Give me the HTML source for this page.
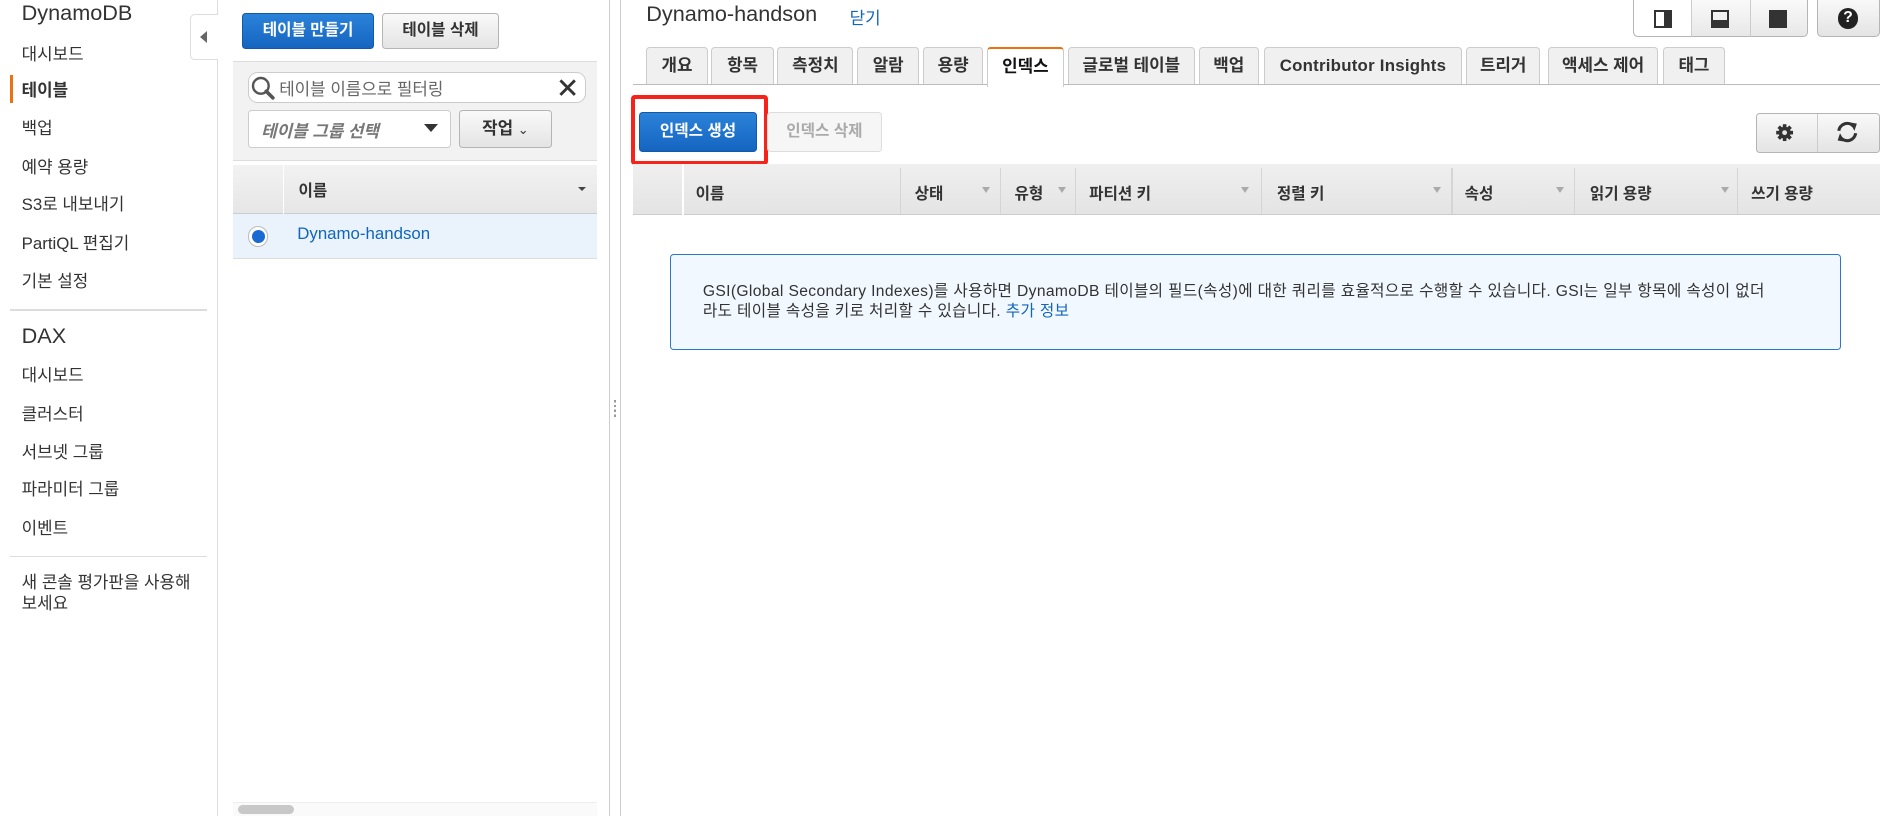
<!DOCTYPE html>
<html><head><meta charset="utf-8"><style>
*{box-sizing:border-box;margin:0;padding:0}
html,body{width:1887px;height:816px;overflow:hidden;background:#fff}
#w{zoom:1.2035;width:1568px;height:678px;position:relative;font-family:"Liberation Sans","Noto Sans CJK KR",sans-serif;color:#333;font-size:14px}
.a{position:absolute}
.nav{left:18px;font-size:14px;color:#333;white-space:nowrap}
.btn{position:absolute;border:1px solid #aab;border-radius:3px;background:linear-gradient(#f9f9f9,#e4e4e4);font-size:13px;font-weight:bold;color:#333;text-align:center;border-color:#b5b5b5}
.bb{background:linear-gradient(#2b82d9,#1565c0);border-color:#1459a8;color:#fff}
.tab{position:absolute;top:39px;height:31px;border:1px solid #ccc;border-bottom:none;background:#f0f0f0;border-radius:3px 3px 0 0;font-size:14px;font-weight:bold;color:#333;text-align:center;line-height:30px}
.th{position:absolute;font-size:13px;font-weight:bold;color:#333;top:150px}
.ar{position:absolute;top:155px;width:0;height:0;border-left:4px solid transparent;border-right:4px solid transparent;border-top:5px solid #aaa}
.dv{position:absolute;top:140px;height:38px;width:1px;background:#d5d5d5}
</style></head><body><div id="w">
<div class="a" style="left:180px;top:0;width:1px;height:678px;background:#ddd"></div>
<div class="a" style="left:158px;top:12px;width:23px;height:38px;background:#fff;border:1px solid #ddd;border-right:none;border-radius:4px 0 0 4px"></div>
<div class="a" style="left:166px;top:26px;border-right:6px solid #666;border-top:5px solid transparent;border-bottom:5px solid transparent"></div>
<div class="a nav" style="top:0px;font-size:18px">DynamoDB</div>
<div class="a nav" style="top:33px">대시보드</div>
<div class="a" style="left:8px;top:62px;width:3px;height:24px;background:#ec7211"></div>
<div class="a nav" style="top:63px;font-weight:bold">테이블</div>
<div class="a nav" style="top:95px">백업</div>
<div class="a nav" style="top:127px">예약 용량</div>
<div class="a nav" style="top:158px">S3로 내보내기</div>
<div class="a nav" style="top:190px">PartiQL 편집기</div>
<div class="a nav" style="top:222px">기본 설정</div>
<div class="a" style="left:8px;top:257px;width:164px;height:1px;background:#ddd"></div>
<div class="a nav" style="top:268px;font-size:18px">DAX</div>
<div class="a nav" style="top:300px">대시보드</div>
<div class="a nav" style="top:332px">클러스터</div>
<div class="a nav" style="top:364px">서브넷 그룹</div>
<div class="a nav" style="top:395px">파라미터 그룹</div>
<div class="a nav" style="top:427px">이벤트</div>
<div class="a" style="left:8px;top:462px;width:164px;height:1px;background:#ddd"></div>
<div class="a nav" style="top:475px;line-height:18px">새 콘솔 평가판을 사용해<br>보세요</div>
<div class="btn bb" style="left:201px;top:11px;width:110px;height:30px;line-height:28px">테이블 만들기</div>
<div class="btn" style="left:317px;top:11px;width:98px;height:30px;line-height:28px">테이블 삭제</div>
<div class="a" style="left:194px;top:51px;width:302px;height:83px;background:#f2f2f2;border-top:1px solid #ddd;border-bottom:1px solid #ddd"></div>
<div class="a" style="left:206px;top:60px;width:281px;height:26px;background:#fff;border:1px solid #ccc;border-radius:8px"></div>
<svg class="a" style="left:208px;top:62px" width="22" height="22"><circle cx="9" cy="9" r="6.5" fill="none" stroke="#555" stroke-width="2"/><path d="M13.5 13.5L19 19" stroke="#555" stroke-width="3" stroke-linecap="round"/></svg>
<div class="a" style="left:232px;top:62px;font-size:14px;color:#666">테이블 이름으로 필터링</div>
<svg class="a" style="left:464px;top:65px" width="16" height="16"><path d="M2 2L14 14M14 2L2 14" stroke="#333" stroke-width="2.4"/></svg>
<div class="a" style="left:206px;top:91px;width:169px;height:32px;background:#fff;border:1px solid #ccc;border-radius:3px"></div>
<div class="a" style="left:217px;top:97px;font-size:14px;color:#777;font-style:italic;font-weight:bold">테이블 그룹 선택</div>
<div class="a" style="left:352px;top:103px;border-left:6px solid transparent;border-right:6px solid transparent;border-top:7px solid #333"></div>
<div class="btn" style="left:381px;top:91px;width:78px;height:32px;line-height:30px;font-size:14px">작업 <span style="font-weight:normal;font-size:11px">&#8964;</span></div>
<div class="a" style="left:194px;top:137px;width:302px;height:41px;background:linear-gradient(#f2f2f2,#e6e6e6);border-bottom:1px solid #ccc"></div>
<div class="a" style="left:235px;top:137px;width:1px;height:41px;background:#fff"></div>
<div class="a" style="left:248px;top:148px;font-size:13px;font-weight:bold">이름</div>
<div class="a" style="left:480px;top:155px;border-left:4px solid transparent;border-right:4px solid transparent;border-top:4px solid #444"></div>
<div class="a" style="left:194px;top:178px;width:302px;height:37px;background:#eaf3fc;border-bottom:1px solid #ddd"></div>
<div class="a" style="left:206px;top:188px;width:17px;height:17px;border-radius:50%;background:#fff;border:1px solid #bbb"></div>
<div class="a" style="left:209px;top:191px;width:11px;height:11px;border-radius:50%;background:#1a6bd1"></div>
<div class="a" style="left:247px;top:186px;font-size:14px;color:#1166bb">Dynamo-handson</div>
<div class="a" style="left:194px;top:666px;width:302px;height:12px;background:#fafafa;border-top:1px solid #eee"></div>
<div class="a" style="left:198px;top:669px;width:46px;height:7px;border-radius:4px;background:#c8c8c8"></div>
<div class="a" style="left:506px;top:0;width:1px;height:678px;background:#ccc"></div>
<div class="a" style="left:515px;top:0;width:1px;height:678px;background:#ccc"></div>
<div class="a" style="left:510px;top:332px;width:2px;height:16px;background:repeating-linear-gradient(#999 0 2px,transparent 2px 4px)"></div>
<div class="a" style="left:537px;top:1px;font-size:18px;color:#333">Dynamo-handson</div>
<div class="a" style="left:706px;top:3px;font-size:14px;color:#1166bb">닫기</div>
<div class="btn" style="left:1357px;top:-2px;width:145px;height:33px;border-radius:0 0 4px 4px;background:linear-gradient(#fafafa,#e8e8e8)"></div>
<div class="a" style="left:1358px;top:0;width:47px;height:30px;background:#fff;border-radius:0 0 0 4px"></div>
<div class="a" style="left:1405px;top:0;width:1px;height:31px;background:#ccc"></div>
<div class="a" style="left:1454px;top:0;width:1px;height:31px;background:#ccc"></div>
<div class="a" style="left:1374px;top:8px;width:15px;height:15px;border:2px solid #333;border-right-width:7px"></div>
<div class="a" style="left:1422px;top:8px;width:15px;height:15px;border:2px solid #333;border-bottom-width:7px"></div>
<div class="a" style="left:1470px;top:8px;width:15px;height:15px;background:#333"></div>
<div class="btn" style="left:1510px;top:-2px;width:52px;height:33px;border-radius:0 0 4px 4px"></div>
<div class="a" style="left:1527px;top:7px;width:17px;height:17px;border-radius:50%;background:#222;color:#fff;font-size:13px;font-weight:bold;text-align:center;line-height:17px">?</div>
<div class="a" style="left:526px;top:70px;width:1036px;height:1px;background:#bbb"></div>
<div class="tab" style="left:537px;width:51px">개요</div>
<div class="tab" style="left:591px;width:52px">항목</div>
<div class="tab" style="left:646px;width:63px">측정치</div>
<div class="tab" style="left:712px;width:52px">알람</div>
<div class="tab" style="left:767px;width:50px">용량</div>
<div class="tab" style="left:820px;width:64px;background:#fff;border-top:2px solid #ec7211;height:33px;color:#111">인덱스</div>
<div class="tab" style="left:887px;width:106px">글로벌 테이블</div>
<div class="tab" style="left:996px;width:50px">백업</div>
<div class="tab" style="left:1050px;width:165px;letter-spacing:0.2px">Contributor Insights</div>
<div class="tab" style="left:1218px;width:62px">트리거</div>
<div class="tab" style="left:1286px;width:92px">액세스 제어</div>
<div class="tab" style="left:1382px;width:51px">태그</div>
<div class="a" style="left:524px;top:79px;width:114px;height:58px;border:4px solid #f5231a;border-radius:3px"></div>
<div class="btn bb" style="left:531px;top:93px;width:98px;height:33px;line-height:31px">인덱스 생성</div>
<div class="btn" style="left:637px;top:93px;width:96px;height:33px;line-height:31px;color:#aaa;border-color:#ddd;background:#f6f6f6">인덱스 삭제</div>
<div class="btn" style="left:1459px;top:94px;width:103px;height:33px"></div>
<div class="a" style="left:1510px;top:95px;width:1px;height:31px;background:#ccc"></div>
<svg class="a" style="left:1475px;top:102px" width="16" height="16" viewBox="0 0 16 16"><g fill="#333"><circle cx="8" cy="8" r="5"/><rect x="6.5" y="1" width="3" height="14"/><rect x="1" y="6.5" width="14" height="3"/><rect x="6.5" y="1" width="3" height="14" transform="rotate(45 8 8)"/><rect x="6.5" y="1" width="3" height="14" transform="rotate(-45 8 8)"/></g><circle cx="8" cy="8" r="2" fill="#e8e8e8"/></svg>
<svg class="a" style="left:1524px;top:100px" width="22" height="20" viewBox="0 0 22 20"><path d="M4 9A7 7 0 0 1 16 5" fill="none" stroke="#333" stroke-width="2.6"/><path d="M13 2L19 3L17 9Z" fill="#333"/><path d="M18 11A7 7 0 0 1 6 15" fill="none" stroke="#333" stroke-width="2.6"/><path d="M9 18L3 17L5 11Z" fill="#333"/></svg>
<div class="a" style="left:526px;top:136px;width:1036px;height:43px;background:linear-gradient(#efefef,#e4e4e4);border-bottom:1px solid #ccc"></div>
<div class="a" style="left:567px;top:136px;width:1px;height:43px;background:#fff"></div>
<div class="th" style="left:578px">이름</div><div class="dv" style="left:748px"></div>
<div class="th" style="left:760px">상태</div><div class="ar" style="left:816px"></div><div class="dv" style="left:831px"></div>
<div class="th" style="left:843px">유형</div><div class="ar" style="left:879px"></div><div class="dv" style="left:893px"></div>
<div class="th" style="left:905px">파티션 키</div><div class="ar" style="left:1031px"></div><div class="dv" style="left:1048px"></div>
<div class="th" style="left:1061px">정렬 키</div><div class="ar" style="left:1191px"></div><div class="dv" style="left:1206px"></div>
<div class="th" style="left:1217px">속성</div><div class="ar" style="left:1293px"></div><div class="dv" style="left:1308px"></div>
<div class="th" style="left:1321px">읽기 용량</div><div class="ar" style="left:1430px"></div><div class="dv" style="left:1443px"></div>
<div class="th" style="left:1455px">쓰기 용량</div>
<div class="a" style="left:557px;top:211px;width:973px;height:80px;background:#f1f8ff;border:1px solid #2b77c4;border-radius:3px"></div>
<div class="a" style="left:584px;top:234px;width:918px;font-size:13px;line-height:17px;color:#333;letter-spacing:0.3px">GSI(Global Secondary Indexes)를 사용하면 DynamoDB 테이블의 필드(속성)에 대한 쿼리를 효율적으로 수행할 수 있습니다. GSI는 일부 항목에 속성이 없더<br>라도 테이블 속성을 키로 처리할 수 있습니다. <span style="color:#1166bb">추가 정보</span></div>
</div></body></html>
